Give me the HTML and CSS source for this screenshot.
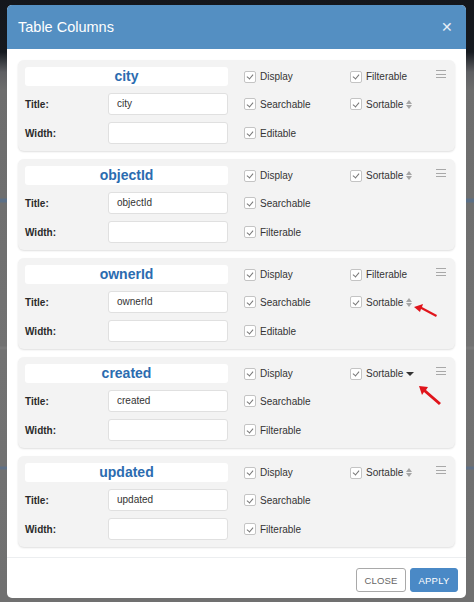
FILE: index.html
```html
<!DOCTYPE html>
<html>
<head>
<meta charset="utf-8">
<link rel="stylesheet" href="styles.css">
</head>
<body>
<div class="modal">
  <div class="modal-header">
    <span class="modal-title">Table Columns</span>
    <span class="close-x">&#x2715;</span>
  </div>
  <div class="modal-body">

    <div class="card">
      <div class="name">city</div>
      <div class="cb c2"><span class="box"></span>Display</div>
      <div class="cb c3"><span class="box"></span>Filterable</div>
      <div class="menu"><i></i><i></i><i></i></div>
      <div class="field"><label>Title:</label><div class="input">city</div></div>
      <div class="cb c2"><span class="box"></span>Searchable</div>
      <div class="cb c3"><span class="box"></span>Sortable<span class="sort both"></span></div>
      <div class="field"><label>Width:</label><div class="input"></div></div>
      <div class="cb c2"><span class="box"></span>Editable</div>
    </div>

    <div class="card">
      <div class="name">objectId</div>
      <div class="cb c2"><span class="box"></span>Display</div>
      <div class="cb c3"><span class="box"></span>Sortable<span class="sort both"></span></div>
      <div class="menu"><i></i><i></i><i></i></div>
      <div class="field"><label>Title:</label><div class="input">objectId</div></div>
      <div class="cb c2"><span class="box"></span>Searchable</div>
      <div class="field"><label>Width:</label><div class="input"></div></div>
      <div class="cb c2"><span class="box"></span>Filterable</div>
    </div>

    <div class="card">
      <div class="name">ownerId</div>
      <div class="cb c2"><span class="box"></span>Display</div>
      <div class="cb c3"><span class="box"></span>Filterable</div>
      <div class="menu"><i></i><i></i><i></i></div>
      <div class="field"><label>Title:</label><div class="input">ownerId</div></div>
      <div class="cb c2"><span class="box"></span>Searchable</div>
      <div class="cb c3"><span class="box"></span>Sortable<span class="sort both"></span></div>
      <div class="field"><label>Width:</label><div class="input"></div></div>
      <div class="cb c2"><span class="box"></span>Editable</div>
    </div>

    <div class="card">
      <div class="name">created</div>
      <div class="cb c2"><span class="box"></span>Display</div>
      <div class="cb c3"><span class="box"></span>Sortable<span class="sort down"></span></div>
      <div class="menu"><i></i><i></i><i></i></div>
      <div class="field"><label>Title:</label><div class="input">created</div></div>
      <div class="cb c2"><span class="box"></span>Searchable</div>
      <div class="field"><label>Width:</label><div class="input"></div></div>
      <div class="cb c2"><span class="box"></span>Filterable</div>
    </div>

    <div class="card">
      <div class="name">updated</div>
      <div class="cb c2"><span class="box"></span>Display</div>
      <div class="cb c3"><span class="box"></span>Sortable<span class="sort both"></span></div>
      <div class="menu"><i></i><i></i><i></i></div>
      <div class="field"><label>Title:</label><div class="input">updated</div></div>
      <div class="cb c2"><span class="box"></span>Searchable</div>
      <div class="field"><label>Width:</label><div class="input"></div></div>
      <div class="cb c2"><span class="box"></span>Filterable</div>
    </div>

  </div>
  <div class="modal-footer">
    <button class="btn btn-close">CLOSE</button>
    <button class="btn btn-apply">APPLY</button>
  </div>
</div>

<svg class="arrow arrow1" width="24" height="14" viewBox="0 0 24 14">
  <polygon points="0,3 9,0 8,3 23,11 22,13 7,5 6,8" fill="#e0141b"/>
</svg>
<svg class="arrow arrow2" width="24" height="20" viewBox="0 0 24 20">
  <polygon points="0,0 9,1 7,4 22,17 20,19 5,6 3,9" fill="#e0141b"/>
</svg>
</body>
</html>
```
FILE: styles.css
```css
* { box-sizing: border-box; }
html, body { margin: 0; padding: 0; }
body {
  width: 474px;
  height: 602px;
  overflow: hidden;
  position: relative;
  font-family: "Liberation Sans", Arial, sans-serif;
  background:
    linear-gradient(to bottom,
      #14161b 0px, #161a20 52px, #5e5f62 72px, #6d6d6d 90px,
      #6f6f6f 198px, #5b6f86 199px, #5b6f86 202px, #6f6f6f 203px,
      #727272 346px, #7a7a7a 347px, #7a7a7a 349px, #727272 350px,
      #717171 466px, #5f7086 467px, #5f7086 469px, #717171 470px,
      #707070 602px);
  padding-top: 5px;
  padding-left: 7px;
}
.modal {
  width: 459px;
  height: 593px;
  background: #fff;
  border-radius: 5px;
  overflow: hidden;
  display: flex;
  flex-direction: column;
}
.modal-header {
  height: 44px;
  background: #548fc2;
  display: flex;
  align-items: center;
  justify-content: space-between;
  padding: 0 13px 0 11px;
  color: #fff;
}
.modal-title { font-size: 14.5px; }
.close-x { font-size: 14px; color: #e6eef6; }
.modal-body {
  padding: 11px 11px 10px 11px;
  display: flex;
  flex-direction: column;
  gap: 8px;
  border-bottom: 1px solid #eceef0;
}
.card {
  height: 91px;
  background: #f3f3f3;
  border-radius: 6px;
  box-shadow: 0 1px 2px rgba(0,0,0,0.13);
  padding: 7px 7px 8px 7px;
  display: grid;
  grid-template-columns: 203px 122px 1fr 12px;
  grid-template-rows: 19px 22px 22px;
  row-gap: 7px;
}
.name {
  grid-column: 1;
  background: #fff;
  border-radius: 3px;
  text-align: center;
  font-weight: bold;
  font-size: 14px;
  line-height: 19px;
  color: #2b6cb0;
}
.field {
  grid-column: 1;
  display: flex;
  align-items: center;
}
.field label {
  width: 83px;
  font-size: 10px;
  font-weight: bold;
  color: #2a2a2a;
}
.input {
  width: 120px;
  height: 22px;
  background: #fff;
  border: 1px solid #e0e0e0;
  border-radius: 3px;
  font-size: 10px;
  color: #333;
  line-height: 20px;
  padding-left: 8px;
}
.cb {
  display: flex;
  align-items: center;
  font-size: 10px;
  color: #333;
}
.c2 { grid-column: 2; padding-left: 16px; }
.c3 { grid-column: 3; }
.box {
  width: 12px;
  height: 12px;
  border: 1px solid #c4c4c4;
  border-radius: 2px;
  background: #fff;
  margin-right: 4px;
  position: relative;
  flex: none;
}
.box::after {
  content: "";
  position: absolute;
  left: 3px;
  top: 1.5px;
  width: 3px;
  height: 5px;
  border-right: 1px solid #777;
  border-bottom: 1px solid #777;
  transform: rotate(40deg);
}
.sort {
  display: inline-block;
  width: 7px;
  height: 9px;
  margin-left: 3px;
  position: relative;
}
.sort.both::before, .sort.both::after {
  content: "";
  position: absolute;
  left: 0;
  border-left: 3.5px solid transparent;
  border-right: 3.5px solid transparent;
}
.sort.both::before { top: 0; border-bottom: 4px solid #a5a5a5; }
.sort.both::after { bottom: 0; border-top: 4px solid #a5a5a5; }
.sort.down::after {
  content: "";
  position: absolute;
  left: 0;
  top: 3px;
  border-left: 4px solid transparent;
  border-right: 4px solid transparent;
  border-top: 4px solid #333;
}
.menu {
  grid-column: 4;
  display: flex;
  flex-direction: column;
  gap: 2.5px;
  padding-top: 3px;
  align-self: start;
}
.menu i {
  display: block;
  width: 10px;
  height: 1px;
  background: #a8a8a8;
}
.modal-footer {
  flex: 1;
  display: flex;
  justify-content: flex-end;
  align-items: flex-start;
  gap: 4px;
  padding: 10px 8px 0 0;
}
.btn {
  height: 24px;
  font-family: "Liberation Sans", Arial, sans-serif;
  font-size: 9.5px;
  letter-spacing: 0.2px;
  border-radius: 3px;
  padding: 0;
  cursor: pointer;
}
.btn-close {
  width: 50px;
  background: #fff;
  border: 1px solid #a9a9a9;
  color: #666;
}
.btn-apply {
  width: 48px;
  background: #4a89c6;
  border: 1px solid #4a89c6;
  color: #fff;
}
.arrow { position: absolute; }
.arrow1 { left: 414px; top: 304px; }
.arrow2 { left: 419px; top: 386px; }
```
